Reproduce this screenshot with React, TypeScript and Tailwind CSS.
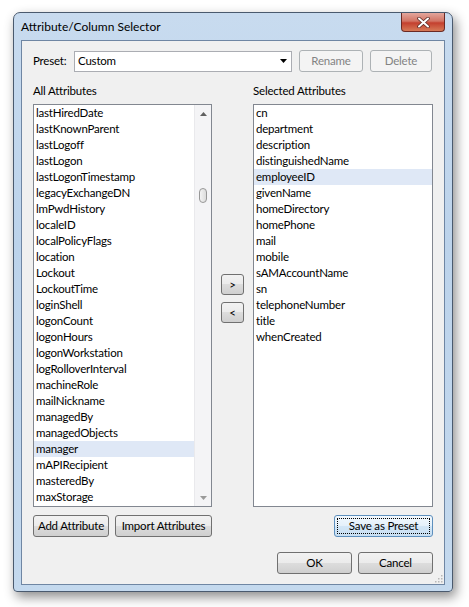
import React from 'react'

const allAttrs = [
  'lastHiredDate', 'lastKnownParent', 'lastLogoff', 'lastLogon', 'lastLogonTimestamp',
  'legacyExchangeDN', 'lmPwdHistory', 'localeID', 'localPolicyFlags', 'location',
  'Lockout', 'LockoutTime', 'loginShell', 'logonCount', 'logonHours',
  'logonWorkstation', 'logRolloverInterval', 'machineRole', 'mailNickname', 'managedBy',
  'managedObjects', 'manager', 'mAPIRecipient', 'masteredBy', 'maxStorage',
]

const selectedAttrs = [
  'cn', 'department', 'description', 'distinguishedName', 'employeeID', 'givenName',
  'homeDirectory', 'homePhone', 'mail', 'mobile', 'sAMAccountName', 'sn',
  'telephoneNumber', 'title', 'whenCreated',
]

const font = { fontFamily: 'Lato, "Noto Sans", "DejaVu Sans", sans-serif' }

function Btn({ children, className = '', disabled = false }: { children: React.ReactNode; className?: string; disabled?: boolean }) {
  if (disabled) {
    return (
      <div className={`flex items-center justify-center whitespace-nowrap rounded-[3px] border border-[#adb2b5] bg-[#f4f4f4] text-[#838383] ${className}`}>
        {children}
      </div>
    )
  }
  return (
    <div className={`flex items-center justify-center whitespace-nowrap rounded-[3px] border border-[#707070] bg-[linear-gradient(to_bottom,#f2f2f2_0%,#ebebeb_50%,#dddddd_50%,#cfcfcf_100%)] text-black ${className}`}>
      {children}
    </div>
  )
}

function ListRow({ label, selected }: { label: string; selected?: boolean }) {
  return (
    <div className={`h-[16px] leading-[15px] pl-[2px] whitespace-nowrap ${selected ? 'bg-[#dfe8f6]' : ''}`}>
      {label}
    </div>
  )
}

export default function App() {
  return (
    <div className="w-[469px] h-[607px] bg-white pl-[13px] pt-[12px] text-[11.5px] tracking-[-0.2px] text-black overflow-hidden" style={font}>
      <div className="w-[440px] h-[580px] flex flex-col rounded-t-[7px] rounded-b-[4px] border border-[#4a5a6e] bg-[linear-gradient(to_bottom,#c8dbef_0%,#bcd3eb_40%,#c4d9ee_100%)] shadow-[3px_5px_12px_rgba(0,0,0,0.45)]">
        {/* title bar */}
        <div className="h-[27px] flex items-start justify-between pl-[7px] pr-[7px]">
          <div className="pt-[5px] text-[12px] tracking-normal text-black">Attribute/Column Selector</div>
          <div className="w-[44px] h-[19px] rounded-b-[4px] border border-t-0 border-[#6b2a24] bg-[linear-gradient(to_bottom,#e3a69c_0%,#d27464_45%,#c4402f_55%,#d67a57_100%)] flex items-center justify-center">
            <svg width="13" height="11" viewBox="0 0 13 11">
              <path d="M2 1.5 L11 9.5 M11 1.5 L2 9.5" stroke="#5a2a25" strokeWidth="3.6" strokeLinecap="round" />
              <path d="M2 1.5 L11 9.5 M11 1.5 L2 9.5" stroke="#ffffff" strokeWidth="2" strokeLinecap="round" />
            </svg>
          </div>
        </div>

        {/* client area */}
        <div className="relative mx-[7px] mb-[6px] flex-1 border border-[#6f86a3] bg-[#f0f0f0] pl-[11px] pr-[11px] pt-[9px] flex flex-col">
          {/* preset row */}
          <div className="flex items-center h-[22px]">
            <div className="w-[41px]">Preset:</div>
            <div className="w-[218px] h-[21px] border border-[#abadb3] bg-white flex items-center justify-between pl-[3px] pr-[4px]">
              <span>Custom</span>
              <svg width="7" height="4" viewBox="0 0 7 4"><path d="M0 0 H7 L3.5 4 Z" fill="#000" /></svg>
            </div>
            <Btn disabled className="ml-[7px] w-[64px] h-[22px]">Rename</Btn>
            <Btn disabled className="ml-[7px] w-[62px] h-[22px]">Delete</Btn>
          </div>

          {/* labels */}
          <div className="flex mt-[12px] h-[14px] leading-[14px]">
            <div className="w-[220px]">All Attributes</div>
            <div>Selected Attributes</div>
          </div>

          {/* lists */}
          <div className="flex mt-[6px] h-[403px]">
            <div className="w-[179px] h-full border border-[#828790] bg-white flex">
              <div className="flex-1 overflow-hidden">
                {allAttrs.map(a => (
                  <ListRow key={a} label={a} selected={a === 'manager'} />
                ))}
              </div>
              <div className="w-[17px] h-full bg-[#f4f4f6] border-l border-[#e9e9ec] flex flex-col items-center">
                <div className="h-[17px] flex items-center justify-center">
                  <svg width="7" height="4" viewBox="0 0 7 4"><path d="M0 4 H7 L3.5 0 Z" fill="#606060" /></svg>
                </div>
                <div className="mt-[66px] w-[8px] h-[15px] rounded-[4px] border border-[#979797] bg-[linear-gradient(to_right,#f3f3f3,#dcdcdc)]" />
                <div className="flex-1" />
                <div className="h-[17px] flex items-center justify-center">
                  <svg width="7" height="4" viewBox="0 0 7 4"><path d="M0 0 H7 L3.5 4 Z" fill="#9a9a9a" /></svg>
                </div>
              </div>
            </div>

            <div className="w-[41px] flex flex-col items-center pt-[170px]">
              <Btn className="w-[23px] h-[21px]">&gt;</Btn>
              <Btn className="mt-[7px] w-[23px] h-[21px]">&lt;</Btn>
            </div>

            <div className="w-[180px] h-full border border-[#828790] bg-white overflow-hidden">
              {selectedAttrs.map(a => (
                <ListRow key={a} label={a} selected={a === 'employeeID'} />
              ))}
            </div>
          </div>

          {/* list buttons */}
          <div className="flex mt-[8px] h-[22px]">
            <Btn className="w-[76px] h-[22px]">Add Attribute</Btn>
            <Btn className="ml-[6px] w-[97px] h-[22px]">Import Attributes</Btn>
            <div className="flex-1" />
            <div className="w-[99px] h-[22px] rounded-[3px] border border-[#5d8fbd] bg-[linear-gradient(to_bottom,#f2f8fd_0%,#e4f0fa_50%,#d3e6f6_50%,#c8dff2_100%)] p-[2px]">
              <div className="w-full h-full border border-dotted border-black flex items-center justify-center whitespace-nowrap">
                Save as Preset
              </div>
            </div>
          </div>

          {/* ok / cancel */}
          <div className="flex justify-end mt-[15px] h-[22px]">
            <Btn className="w-[75px] h-[22px]">OK</Btn>
            <Btn className="ml-[6px] w-[75px] h-[22px]">Cancel</Btn>
          </div>

          {/* resize grip */}
          <svg className="absolute right-[1px] bottom-[1px]" width="10" height="10" viewBox="0 0 10 10">
            {[[8, 2], [8, 5], [5, 5], [8, 8], [5, 8], [2, 8]].map(([x, y], i) => (
              <rect key={i} x={x} y={y} width="1.5" height="1.5" fill="#b8b8b8" />
            ))}
          </svg>
        </div>
      </div>
    </div>
  )
}
